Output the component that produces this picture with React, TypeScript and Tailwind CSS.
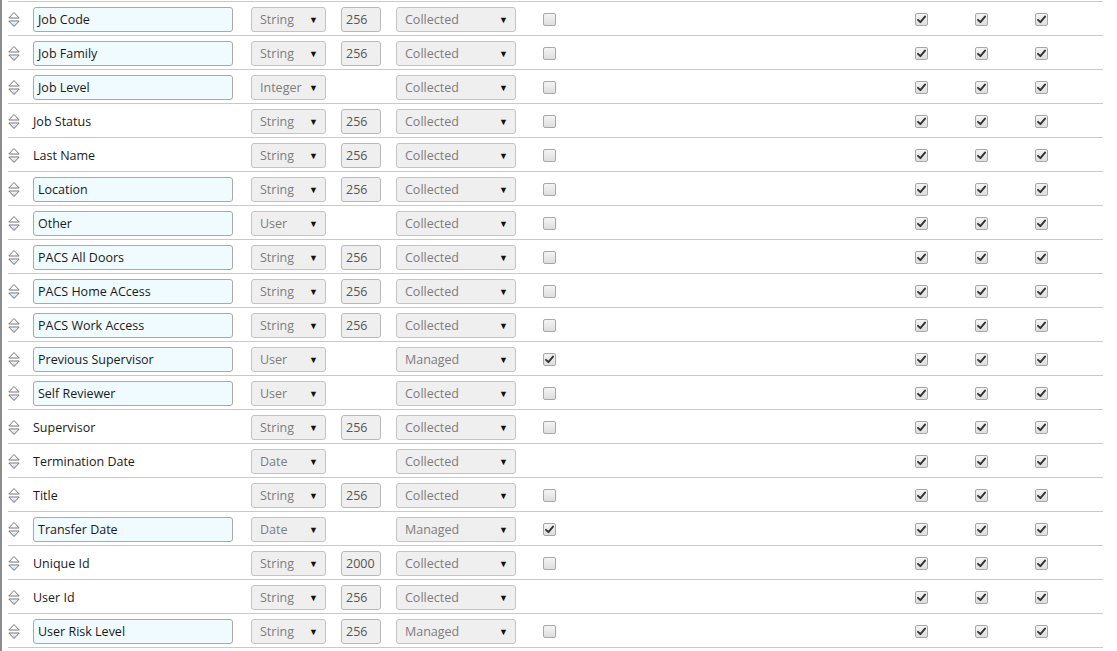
import React from "react";

type Row = {
  name: string;
  editable: boolean;
  type: string;
  len?: string;
  status: string;
  flag: "none" | "on" | "off";
};

const rows: Row[] = [
  { name: "Job Code", editable: true, type: "String", len: "256", status: "Collected", flag: "off" },
  { name: "Job Family", editable: true, type: "String", len: "256", status: "Collected", flag: "off" },
  { name: "Job Level", editable: true, type: "Integer", status: "Collected", flag: "off" },
  { name: "Job Status", editable: false, type: "String", len: "256", status: "Collected", flag: "off" },
  { name: "Last Name", editable: false, type: "String", len: "256", status: "Collected", flag: "off" },
  { name: "Location", editable: true, type: "String", len: "256", status: "Collected", flag: "off" },
  { name: "Other", editable: true, type: "User", status: "Collected", flag: "off" },
  { name: "PACS All Doors", editable: true, type: "String", len: "256", status: "Collected", flag: "off" },
  { name: "PACS Home ACcess", editable: true, type: "String", len: "256", status: "Collected", flag: "off" },
  { name: "PACS Work Access", editable: true, type: "String", len: "256", status: "Collected", flag: "off" },
  { name: "Previous Supervisor", editable: true, type: "User", status: "Managed", flag: "on" },
  { name: "Self Reviewer", editable: true, type: "User", status: "Collected", flag: "off" },
  { name: "Supervisor", editable: false, type: "String", len: "256", status: "Collected", flag: "off" },
  { name: "Termination Date", editable: false, type: "Date", status: "Collected", flag: "none" },
  { name: "Title", editable: false, type: "String", len: "256", status: "Collected", flag: "off" },
  { name: "Transfer Date", editable: true, type: "Date", status: "Managed", flag: "on" },
  { name: "Unique Id", editable: false, type: "String", len: "2000", status: "Collected", flag: "off" },
  { name: "User Id", editable: false, type: "String", len: "256", status: "Collected", flag: "none" },
  { name: "User Risk Level", editable: true, type: "String", len: "256", status: "Managed", flag: "off" },
];

function SortIcon() {
  return (
    <svg width="12" height="17" viewBox="0 0 12 17" className="shrink-0">
      <defs>
        <linearGradient id="sg" x1="0" y1="0" x2="0" y2="1">
          <stop offset="0" stopColor="#ffffff" />
          <stop offset="1" stopColor="#9fd3ee" />
        </linearGradient>
      </defs>
      <polygon points="6,1.5 11.2,7 0.8,7" fill="#ffffff" stroke="#777" strokeWidth="1" strokeLinejoin="round" />
      <polygon points="0.8,10 11.2,10 6,15.5" fill="url(#sg)" stroke="#777" strokeWidth="1" strokeLinejoin="round" />
    </svg>
  );
}

function Check({ checked }: { checked: boolean }) {
  return (
    <div className="w-[13px] h-[13px] shrink-0 rounded-[2px] border border-[#a7a7a7] bg-gradient-to-b from-[#f4f4f4] to-[#dedede] flex items-center justify-center">
      {checked && (
        <svg width="9" height="9" viewBox="0 0 9 9">
          <path d="M1 4.8 L3.4 7.2 L8 1.6" fill="none" stroke="#333" strokeWidth="1.9" strokeLinecap="round" strokeLinejoin="round" />
        </svg>
      )}
    </div>
  );
}

function Select({ value, width }: { value: string; width: string }) {
  return (
    <div
      className={`${width} h-[25px] shrink-0 rounded-[3px] border border-[#c4c4c4] bg-[#efefef] flex items-center justify-between pl-[8px] pr-[7px] text-[#7d7d7d]`}
    >
      <span className="pt-[2px]">{value}</span>
      <span className="text-[9px] text-[#111] leading-none">▼</span>
    </div>
  );
}

export default function App() {
  return (
    <div
      className="w-[1117px] h-[651px] bg-white border-l-2 border-[#8c8c8c] overflow-hidden text-[12.5px] pt-[1px]"
      style={{ fontFamily: "'Open Sans', 'Noto Sans', sans-serif" }}
    >
      <div className="ml-[6px] w-[1095px]">
        {rows.map((r) => (
          <div key={r.name} className="flex items-center h-[34px] pt-[2px] border-t border-[#c9c9c9]">
            <SortIcon />
            <div className="ml-[13px] w-[200px] shrink-0">
              {r.editable ? (
                <div className="h-[25px] rounded-[3px] border border-[#a9a9a9] bg-[#f0fbff] flex items-center pl-[4px] pt-[2px] text-[#1a1a1a]">
                  {r.name}
                </div>
              ) : (
                <div className="h-[25px] flex items-center pt-[2px] text-[#1a1a1a]">{r.name}</div>
              )}
            </div>
            <div className="ml-[18px]">
              <Select value={r.type} width="w-[75px]" />
            </div>
            <div className="ml-[15px] w-[40px] shrink-0">
              {r.len && (
                <div className="h-[25px] rounded-[3px] border border-[#b9b9b9] bg-[#efefef] flex items-center pl-[4px] pt-[2px] text-[#555]">
                  {r.len}
                </div>
              )}
            </div>
            <div className="ml-[15px]">
              <Select value={r.status} width="w-[120px]" />
            </div>
            <div className="ml-[27px] w-[13px] shrink-0">
              {r.flag !== "none" && <Check checked={r.flag === "on"} />}
            </div>
            <div className="ml-[359px] flex gap-[47px]">
              <Check checked />
              <Check checked />
              <Check checked />
            </div>
          </div>
        ))}
        <div className="border-t border-[#c9c9c9]" />
      </div>
    </div>
  );
}
